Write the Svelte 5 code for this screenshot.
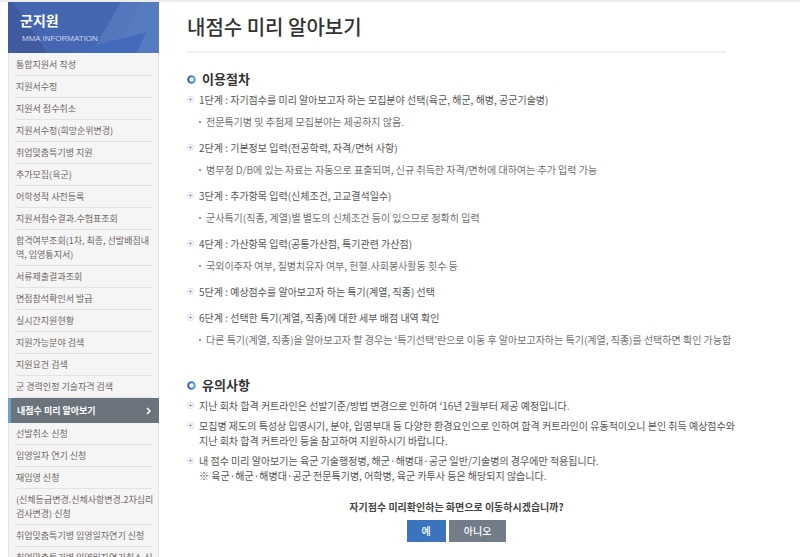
<script>
  const menu = [
    '통합지원서 작성',
    '지원서수정',
    '지원서 접수취소',
    '지원서수정(희망순위변경)',
    '취업맞춤특기병 지원',
    '추가모집(육군)',
    '어학성적 사전등록',
    '지원서접수결과.수험표조회',
    '합격여부조회(1차, 최종, 선발배점내\n역, 입영통지서)',
    '서류제출결과조회',
    '면접참석확인서 발급',
    '실시간지원현황',
    '지원가능분야 검색',
    '지원요건 검색',
    '군 경력인정 기술자격 검색',
    '내점수 미리 알아보기',
    '선발취소 신청',
    '입영일자 연기 신청',
    '재입영 신청',
    '(신체등급변경.신체사항변경.2차심리\n검사변경) 신청',
    '취업맞춤특기병 입영일자연기 신청',
    '취업맞춤특기병 입영일자연기취소 신\n청'
  ];
  const current = '내점수 미리 알아보기';

  const steps = [
    { text: '1단계 : 자기점수를 미리 알아보고자 하는 모집분야 선택(육군, 해군, 해병, 공군기술병)', sub: '전문특기병 및 추첨제 모집분야는 제공하지 않음.' },
    { text: '2단계 : 기본정보 입력(전공학력, 자격/면허 사항)', sub: '병무청 D/B에 있는 자료는 자동으로 표출되며, 신규 취득한 자격/면허에 대하여는 추가 입력 가능' },
    { text: '3단계 : 추가항목 입력(신체조건, 고교결석일수)', sub: '군사특기(직종, 계열)별 별도의 신체조건 등이 있으므로 정확히 입력' },
    { text: '4단계 : 가산항목 입력(공통가산점, 특기관련 가산점)', sub: '국외이주자 여부, 질병치유자 여부, 헌혈.사회봉사활동 횟수 등' },
    { text: '5단계 : 예상점수를 알아보고자 하는 특기(계열, 직종) 선택' },
    { text: '6단계 : 선택한 특기(계열, 직종)에 대한 세부 배점 내역 확인', sub: '다른 특기(계열, 직종)을 알아보고자 할 경우는 ‘특기선택’란으로 이동 후 알아보고자하는 특기(계열, 직종)를 선택하면 확인 가능함' }
  ];

  const notes = [
    '지난 회차 합격 커트라인은 선발기준/방법 변경으로 인하여 ‘16년 2월부터 제공 예정입니다.',
    '모집병 제도의 특성상 입영시기, 분야, 입영부대 등 다양한 환경요인으로 인하여 합격 커트라인이 유동적이오니 본인 취득 예상점수와\n지난 회차 합격 커트라인 등을 참고하여 지원하시기 바랍니다.',
    '내 점수 미리 알아보기는 육군 기술행정병, 해군·해병대·공군 일반/기술병의 경우에만 적용됩니다.\n※ 육군·해군·해병대·공군 전문특기병, 어학병, 육군 카투사 등은 해당되지 않습니다.'
  ];
</script>

{#snippet ring()}
  <svg class="ring" viewBox="0 0 9 9" aria-hidden="true">
    <defs>
      <linearGradient id="ringTone" x1="0" x2="1" y1="0" y2="0">
        <stop offset="0" stop-color="#3b57b0" />
        <stop offset="1" stop-color="#49a5e0" />
      </linearGradient>
    </defs>
    <circle cx="4.5" cy="4.5" r="3.3" fill="none" stroke="url(#ringTone)" stroke-width="2" />
  </svg>
{/snippet}

{#snippet target()}
  <svg class="target" viewBox="0 0 7 7" aria-hidden="true">
    <circle cx="3.5" cy="3.5" r="3" fill="#fff" stroke="#cfd2d8" stroke-width="0.8" />
    <circle cx="3.5" cy="3.5" r="1.1" fill="#5b7fcb" />
  </svg>
{/snippet}

<div class="page">
  <aside>
    <header>
      <svg class="facets" viewBox="0 0 150 50" preserveAspectRatio="none" aria-hidden="true">
        <rect width="150" height="50" fill="#4566b1" />
        <path d="M0 0H5L39 50H0Z" fill="#3f5a9f" />
        <path d="M112 0H131L105 50H83Z" fill="#5377bd" />
        <path d="M131 0H150V50H105Z" fill="#567bc1" />
        <path d="M64 50L89 42L137 30L128 50Z" fill="#446bbb" />
      </svg>
      <strong>군지원</strong>
      <span>MMA INFORMATION</span>
    </header>
    <nav aria-label="군지원">
      <ul>
        {#each menu as item}
          <li class:active={item === current}>
            <a href="#menu" aria-current={item === current ? 'page' : undefined}>{item}</a>
            {#if item === current}
              <svg class="chevron" viewBox="0 0 5 8" aria-hidden="true">
                <path d="M1 1L4 4L1 7" fill="none" stroke="#fff" stroke-width="1.5" />
              </svg>
            {/if}
          </li>
        {/each}
      </ul>
    </nav>
  </aside>

  <main>
    <h1>내점수 미리 알아보기</h1>

    <section>
      <h2>{@render ring()}이용절차</h2>
      <ul class="steps">
        {#each steps as step}
          <li>
            {@render target()}
            <div>
              <p>{step.text}</p>
              {#if step.sub}<p class="sub">{step.sub}</p>{/if}
            </div>
          </li>
        {/each}
      </ul>
    </section>

    <section>
      <h2>{@render ring()}유의사항</h2>
      <ul class="notes">
        {#each notes as note}
          <li>{@render target()}<p>{note}</p></li>
        {/each}
      </ul>
    </section>

    <form class="confirm" onsubmit={(e) => e.preventDefault()}>
      <p>자기점수 미리확인하는 화면으로 이동하시겠습니까?</p>
      <div class="actions">
        <button class="yes" type="submit">예</button>
        <button type="button">아니오</button>
      </div>
    </form>
  </main>
</div>

<style>
  :global(body) {
    background: #fff;
  }
  :global(#app) {
    height: 100vh;
    overflow: hidden;
  }
  .page {
    display: flex;
    align-items: flex-start;
    box-sizing: border-box;
    padding-left: 8px;
    border-top: 2px solid #ececec;
    font-family: 'Noto Sans CJK KR', 'Noto Sans', sans-serif;
    font-size: 10px;
    line-height: 15px;
    color: #555;
  }
  ul {
    margin: 0;
    padding: 0;
    list-style: none;
  }
  p {
    margin: 0;
    white-space: pre-line;
  }

  aside {
    flex: 0 0 151px;
    min-width: 0;
    background: #f5f5f5;
  }
  header {
    position: relative;
    display: flex;
    flex-direction: column;
    box-sizing: border-box;
    height: 51px;
    padding: 8px 12px;
    color: #fff;
  }
  .facets {
    position: absolute;
    inset: 0;
    width: 100%;
    height: 100%;
  }
  header strong,
  header span {
    position: relative;
  }
  header strong {
    font-size: 14px;
    line-height: 20px;
  }
  header span {
    padding-left: 2px;
    font-family: 'Liberation Sans', sans-serif;
    font-size: 8px;
    line-height: 18px;
    color: #c8d5ef;
  }
  nav {
    box-sizing: border-box;
    padding-top: 1px;
    border: solid #e2e2e2;
    border-width: 0 1px;
  }
  nav li {
    margin: 0 6px;
    border-bottom: 1px solid #e3e3e3;
    font-size: 9px;
    line-height: 14px;
  }
  nav a {
    display: block;
    padding: 4px 1px 3px;
    color: #6e6862;
    text-decoration: none;
    white-space: pre;
  }
  nav li.active {
    display: flex;
    align-items: center;
    justify-content: space-between;
    height: 25px;
    margin: 0 -1px;
    padding: 0 8px 0 5px;
    border-left: 3px solid #6aa5c9;
    border-bottom: 0;
    background: #6b747d;
  }
  nav li.active a {
    padding: 0 1px;
    color: #fff;
    font-weight: 700;
  }
  .chevron {
    width: 5px;
    height: 8px;
  }

  main {
    flex: 1;
    min-width: 0;
    padding: 10px 74px 0 28px;
  }
  h1 {
    margin: 0;
    padding-bottom: 9px;
    border-bottom: 2px solid #efefef;
    font-size: 20px;
    font-weight: 500;
    line-height: 30px;
    color: #333;
  }
  h2 {
    display: flex;
    align-items: center;
    gap: 6px;
    margin: 0 0 3px;
    font-size: 13px;
    line-height: 20px;
    color: #333;
  }
  section {
    margin: 16px -32px 0 0;
  }
  section + section {
    margin-top: 28px;
  }
  .ring {
    width: 9px;
    height: 9px;
  }
  .target {
    flex: none;
    width: 7px;
    height: 7px;
    margin-top: 4px;
  }
  section li {
    display: flex;
    gap: 5px;
  }
  .steps,
  .notes {
    display: flex;
    flex-direction: column;
  }
  .steps {
    gap: 11px;
  }
  .notes {
    gap: 5px;
  }
  .sub {
    display: flex;
    align-items: center;
    gap: 5px;
    margin-top: 7px;
    color: #707070;
  }
  .sub::before {
    content: '';
    flex: none;
    width: 2px;
    height: 2px;
    background: #7f9bd3;
  }
  .confirm {
    margin-top: 16px;
    text-align: center;
    font-weight: 700;
    color: #444;
  }
  .actions {
    display: flex;
    justify-content: center;
    gap: 3px;
    margin-top: 6px;
  }
  button {
    padding: 3px 15px;
    border: 0;
    background: #727d89;
    color: #fff;
    font: 500 10px/16px 'Noto Sans CJK KR', sans-serif;
  }
  .yes {
    background: #3b73bd;
  }
</style>
